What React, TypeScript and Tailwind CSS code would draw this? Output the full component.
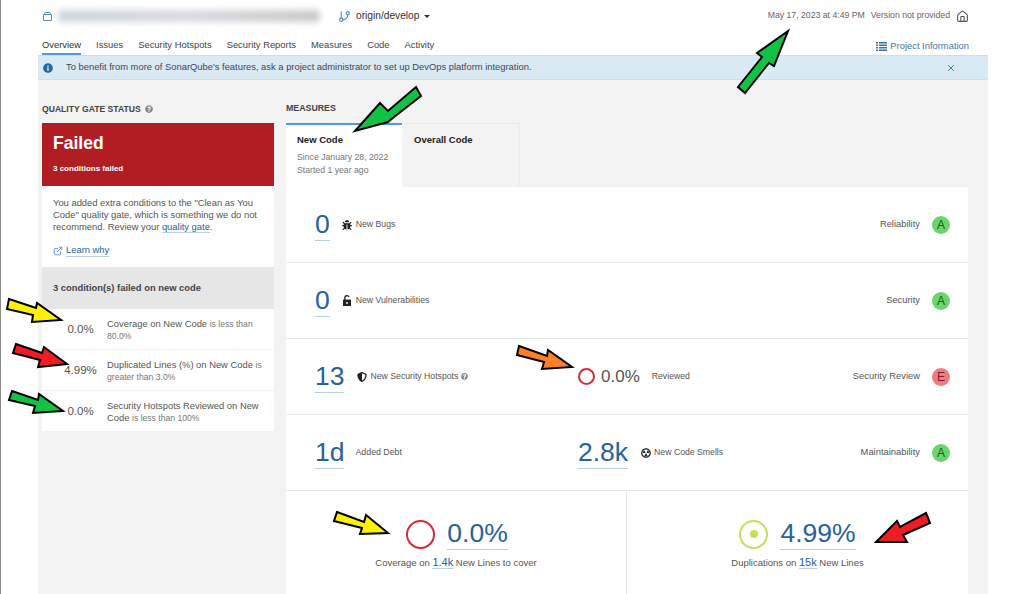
import React from 'react';
import { FaBug, FaInfoCircle, FaQuestionCircle, FaRadiationAlt, FaShieldAlt } from 'react-icons/fa';
import { ExternalLink, GitBranch, Home, X } from 'lucide-react';

const navItems = ['Overview', 'Issues', 'Security Hotspots', 'Security Reports', 'Measures', 'Code', 'Activity'];

// annotation arrows painted over the screenshot
const arrows = [
  { fill: '#12c244', points: '788,31 757,53 762,57 738,87 745,93 769,63 774,66' },
  { fill: '#12c244', points: '355,131 380,103 388,111 416,87 421,96 394,117 388,122' },
  { fill: '#fff200', points: '9,299 36,308 37,303 61,320 32,322 33,315 7,309' },
  { fill: '#ee1c25', points: '16,344 42,353 44,347 67,364 38,367 40,360 13,353' },
  { fill: '#12c244', points: '12,391 38,400 39,394 63,411 33,413 35,406 9,400' },
  { fill: '#ff7f27', points: '519,346 547,356 548,350 572,367 542,369 544,362 517,355' },
  { fill: '#fff200', points: '337,512 364,522 366,515 388,533 360,534 362,528 334,521' },
  { fill: '#ee1c25', points: '876,542 897,521 900,527 926,513 930,523 903,535 907,542' },
];

const Rating = ({ grade, bad }: { grade: string; bad?: boolean }) => (
  <span
    className={`flex h-[18px] w-[18px] items-center justify-center rounded-full text-[12px] ${
      bad ? 'bg-[#ed7d82] text-[#7a1f26]' : 'bg-[#6cd46c] text-[#1f5a1f]'
    }`}
  >
    {grade}
  </span>
);

const Metric = ({ value }: { value: string }) => (
  <span className="border-b border-[#b9d0e4] pb-[1px] text-[26.5px] leading-[30px] text-[#27629c]">{value}</span>
);

const Row = ({ children, label, grade, bad }: { children: React.ReactNode; label: string; grade: string; bad?: boolean }) => (
  <div className="flex h-[76px] items-center border-b border-[#e8e8e8] pl-[29px] pr-[18px]">
    <div className="flex flex-1 items-center">{children}</div>
    <span className="mr-[12px] text-[9.4px] text-[#555]">{label}</span>
    <Rating grade={grade} bad={bad} />
  </div>
);

const Condition = ({ value, children }: { value: string; children: React.ReactNode }) => (
  <div className="mb-[1px] flex h-[40px] items-center bg-white">
    <span className="w-[65px] pl-[12px] pt-[1px] text-center text-[11.5px] text-[#555]">{value}</span>
    <div className="w-[160px] pt-[1px] text-[9.4px] leading-[12px] text-[#555]">{children}</div>
  </div>
);

export default function App() {
  return (
    <div className="relative h-[594px] w-[1024px] overflow-hidden border-l border-[#8a8a8a] bg-white font-['Liberation_Sans',Arial,sans-serif]">
      <div className="ml-[41px] mr-[55px] flex h-[34px] items-center pb-[2px]">
        <svg width="11" height="11" viewBox="0 0 11 11" fill="none" stroke="#5b8dbd" strokeWidth="1" className="mr-[5px]">
          <path d="M1.5 3.5h8v6h-8zM2.5 3.5l.6-2h4.8l.6 2" />
        </svg>
        <div className="h-[12px] w-[262px] rounded-sm bg-gradient-to-r from-[#cfd4dd] via-[#d8dae0] to-[#c9c9c9] blur-[3px]" />
        <GitBranch size={13} color="#4b8ccb" className="ml-[18px] mr-[5px]" />
        <span className="text-[10.2px] text-[#333]">origin/develop</span>
        <span className="ml-[5px] border-x-[3px] border-t-[3px] border-x-transparent border-t-[#333]" />
        <span className="ml-auto text-[8.7px] text-[#666]">May 17, 2023 at 4:49 PM</span>
        <span className="ml-[6px] text-[8.7px] text-[#666]">Version not provided</span>
        <Home size={13} color="#555" className="ml-[6px]" />
      </div>

      <div className="ml-[41px] mr-[55px] flex h-[21px] justify-between">
        <div className="flex gap-[15px] text-[9.4px] text-[#444]">
          {navItems.map((item, i) => (
            <span key={item} className={`h-[21px] pt-[4px] ${i === 0 ? 'border-b-2 border-[#4b9fd5] text-[#333]' : ''}`}>
              {item}
            </span>
          ))}
        </div>
        <div className="flex items-center gap-[3px] pt-[4px] text-[9.4px] text-[#4b76a8]">
          <svg width="11" height="9" viewBox="0 0 11 9" fill="#3f6ea3">
            <path d="M0 0h2v1.5H0zM3 0h8v1.5H3zM0 2.5h2V4H0zM3 2.5h8V4H3zM0 5h2v1.5H0zM3 5h8v1.5H3zM0 7.5h2V9H0zM3 7.5h8V9H3z" />
          </svg>
          Project Information
        </div>
      </div>

      <div className="ml-[37px] w-[950px]">
        <div className="flex h-[25px] items-center border-y border-[#c5e1f5] bg-[#d9eaf5] pl-[5px] pr-[32px] text-[9.4px] text-[#445]">
          <FaInfoCircle size={10} color="#236a97" />
          <span className="ml-[13px] flex-1">To benefit from more of SonarQube's features, ask a project administrator to set up DevOps platform integration.</span>
          <X size={10} color="#236a97" />
        </div>

        <div className="flex h-[520px] gap-[12px] bg-[#f3f3f3] pl-[4px] pt-[22px]">
          <div className="w-[232px]">
            <div className="mb-[7px] flex h-[14px] items-center gap-[4px] text-[8.6px] font-bold text-[#444]">
              QUALITY GATE STATUS
              <FaQuestionCircle size={8} color="#888" />
            </div>
            <div className="h-[63px] bg-[#b01e24] pl-[11px] pt-[9px] text-white">
              <div className="text-[17.5px] font-bold leading-[22px]">Failed</div>
              <div className="mt-[9px] text-[8px] font-bold leading-[12px]">3 conditions failed</div>
            </div>
            <div className="h-[81px] bg-white pl-[11px] pr-[8px] pt-[11px] text-[9.4px] leading-[12px] text-[#555]">
              You added extra conditions to the "Clean as You Code" quality gate, which is something we do not recommend. Review your{' '}
              <span className="border-b border-[#b9d0e4] text-[#27629c]">quality gate</span>.
              <div className="mt-[11px] flex items-center gap-[3px] text-[#27629c]">
                <ExternalLink size={10} color="#4b8ccb" />
                <span className="border-b border-[#b9d0e4]">Learn why</span>
              </div>
            </div>
            <div className="flex h-[42px] items-center bg-[#e6e6e6] pl-[11px] text-[9.4px] font-bold text-[#444]">
              3 condition(s) failed on new code
            </div>
            <Condition value="0.0%">
              Coverage on New Code <span className="text-[8.6px] text-[#777]">is less than 80.0%</span>
            </Condition>
            <Condition value="4.99%">
              Duplicated Lines (%) on New Code <span className="text-[8.6px] text-[#777]">is greater than 3.0%</span>
            </Condition>
            <Condition value="0.0%">
              Security Hotspots Reviewed on New Code <span className="text-[8.6px] text-[#777]">is less than 100%</span>
            </Condition>
          </div>

          <div className="w-[682px]">
            <div className="mb-[7px] flex h-[14px] items-center text-[8.8px] font-bold text-[#444]">MEASURES</div>
            <div className="flex">
              <div className="h-[64px] w-[116px] border-t-2 border-[#4b9fd5] bg-white pl-[11px] pt-[9px]">
                <div className="text-[9.5px] font-bold leading-[12px] text-[#222]">New Code</div>
                <div className="mt-[5px] text-[8.7px] leading-[13px] text-[#777]">
                  Since January 28, 2022
                  <br />
                  Started 1 year ago
                </div>
              </div>
              <div className="h-[64px] w-[118px] border-r border-t border-[#ebebeb] pl-[12px] pt-[10px] text-[9.5px] font-bold leading-[12px] text-[#222]">
                Overall Code
              </div>
            </div>

            <div className="bg-white">
              <Row label="Reliability" grade="A">
                <Metric value="0" />
                <FaBug size={10} color="#222" className="ml-[12px] mr-[4px]" />
                <span className="text-[8.7px] text-[#555]">New Bugs</span>
              </Row>
              <Row label="Security" grade="A">
                <Metric value="0" />
                <svg width="8" height="11" viewBox="0 0 8 11" fill="none" className="ml-[13px] mr-[5px]">
                  <path d="M1.8 5V2.8a2.2 2.2 0 0 1 4.2-.8" stroke="#222" strokeWidth="1.3" />
                  <path d="M0 4.6h8V11H0z" fill="#222" />
                  <path d="M3.3 7h1.4v2H3.3z" fill="#fff" />
                </svg>
                <span className="text-[8.7px] text-[#555]">New Vulnerabilities</span>
              </Row>
              <Row label="Security Review" grade="E" bad>
                <div className="flex w-[263px] items-center">
                  <Metric value="13" />
                  <FaShieldAlt size={10} color="#222" className="ml-[13px] mr-[3px]" />
                  <span className="text-[8.7px] text-[#555]">New Security Hotspots</span>
                  <FaQuestionCircle size={7} color="#888" className="ml-[3px]" />
                </div>
                <span className="h-[17px] w-[17px] rounded-full border-2 border-[#d02f3a]" />
                <span className="ml-[6px] text-[17px] text-[#555]">0.0%</span>
                <span className="ml-[12px] text-[8.7px] text-[#555]">Reviewed</span>
              </Row>
              <Row label="Maintainability" grade="A">
                <div className="flex w-[263px] items-center">
                  <Metric value="1d" />
                  <span className="ml-[11px] text-[8.8px] text-[#555]">Added Debt</span>
                </div>
                <Metric value="2.8k" />
                <FaRadiationAlt size={10} color="#222" className="ml-[13px] mr-[3px]" />
                <span className="text-[8.7px] text-[#555]">New Code Smells</span>
              </Row>
              <div className="flex h-[110px]">
                <div className="flex w-[341px] flex-col items-center border-r border-[#e8e8e8] pt-[27px]">
                  <div className="flex items-center gap-[12px] pl-[2px]">
                    <span className="h-[29px] w-[29px] rounded-full border-2 border-[#d02f3a]" />
                    <Metric value="0.0%" />
                  </div>
                  <div className="mt-[4px] text-[9.5px] text-[#555]">
                    Coverage on <span className="border-b border-[#b9d0e4] text-[11px] text-[#27629c]">1.4k</span> New Lines to cover
                  </div>
                </div>
                <div className="flex flex-1 flex-col items-center pt-[27px]">
                  <div className="flex items-center gap-[12px]">
                    <span className="flex h-[29px] w-[29px] items-center justify-center rounded-full border-2 border-[#c4e05a]">
                      <span className="h-[8px] w-[8px] rounded-full bg-[#c4e05a]" />
                    </span>
                    <Metric value="4.99%" />
                  </div>
                  <div className="mt-[4px] text-[9.5px] text-[#555]">
                    Duplications on <span className="border-b border-[#b9d0e4] text-[11px] text-[#27629c]">15k</span> New Lines
                  </div>
                </div>
              </div>
            </div>
          </div>
        </div>
      </div>

      <svg width="1024" height="594" viewBox="0 0 1024 594" className="pointer-events-none absolute left-[-1px] top-0">
        {arrows.map((a) => (
          <polygon key={a.points} points={a.points} fill={a.fill} stroke="#000" strokeWidth="2" />
        ))}
      </svg>
    </div>
  );
}
